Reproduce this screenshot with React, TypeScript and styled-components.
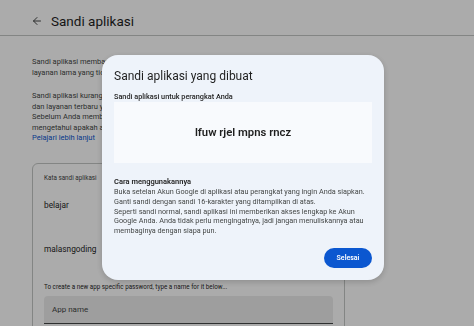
import * as React from "react";
import styled, { createGlobalStyle } from "styled-components";
import { ArrowLeft } from "lucide-react";

const GlobalStyle = createGlobalStyle`
  html, body {
    margin: 0;
    padding: 0;
    width: 474px;
    height: 326px;
    overflow: hidden;
    background: #ffffff;
    font-family: Roboto, "Noto Sans", Arial, sans-serif;
  }
`;

const App: React.FC = () => {
  return (
    <>
      <GlobalStyle />
      <Page>
        <Header>
          <ArrowLeft size={12} strokeWidth={2} color="#444746" />
          <Title>Sandi aplikasi</Title>
        </Header>
        <Content>
          <Para>
            Sandi aplikasi membantu Anda login ke Akun Google di aplikasi dan
            <br />
            layanan lama yang tidak mendukung standar keamanan modern.
          </Para>
          <Para>
            Sandi aplikasi kurang aman dibandingkan menggunakan aplikasi
            <br />
            dan layanan terbaru yang menggunakan standar keamanan modern.
            <br />
            Sebelum Anda membuat sandi aplikasi, sebaiknya Anda
            <br />
            mengetahui apakah aplikasi Anda memerlukan sandi ini untuk login.
            <br />
            <Link>Pelajari lebih lanjut</Link>
          </Para>
          <Card>
            <SmallLabel>Kata sandi aplikasi</SmallLabel>
            <AppRow>belajar</AppRow>
            <AppRow>malasngoding</AppRow>
            <Hint>To create a new app specific password, type a name for it below...</Hint>
            <Input>App name</Input>
          </Card>
        </Content>
      </Page>
      <Scrim />
      <Dialog>
        <DialogTitle>Sandi aplikasi yang dibuat</DialogTitle>
        <FieldLabel>Sandi aplikasi untuk perangkat Anda</FieldLabel>
        <PasswordBox>lfuw rjel mpns rncz</PasswordBox>
        <HowTitle>Cara menggunakannya</HowTitle>
        <HowText>
          Buka setelan Akun Google di aplikasi atau perangkat yang ingin Anda siapkan.
          <br />
          Ganti sandi dengan sandi 16-karakter yang ditampilkan di atas.
          <br />
          Seperti sandi normal, sandi aplikasi ini memberikan akses lengkap ke Akun
          <br />
          Google Anda. Anda tidak perlu mengingatnya, jadi jangan menuliskannya atau
          <br />
          membaginya dengan siapa pun.
        </HowText>
        <Actions>
          <DoneButton>Selesai</DoneButton>
        </Actions>
      </Dialog>
    </>
  );
};

export default App;

const Page = styled.div`
  width: 474px;
  height: 326px;
  overflow: hidden;
  background: #ffffff;
`;

const Header = styled.div`
  height: 36px;
  border-bottom: 1px solid #c4c7c5;
  display: flex;
  align-items: center;
  gap: 8px;
  padding-left: 31px;
  box-sizing: border-box;
  padding-top: 6px;
`;

const Title = styled.div`
  font-size: 13.5px;
  color: #1f1f1f;
  line-height: 20px;
`;

const Content = styled.div`
  width: 313px;
  margin-left: 32px;
  padding-top: 21px;
`;

const Para = styled.p`
  margin: 0 0 13px;
  font-size: 7.5px;
  line-height: 10.5px;
  color: #444746;
  white-space: nowrap;
`;

const Link = styled.span`
  color: #0b57d0;
`;

const Card = styled.div`
  margin-top: 19px;
  border: 1px solid #c4c7c5;
  border-radius: 6px;
  padding: 10px 11px 0;
  height: 200px;
`;

const SmallLabel = styled.div`
  font-size: 6.3px;
  line-height: 8px;
  color: #444746;
  height: 9px;
`;

const AppRow = styled.div`
  height: 44px;
  display: flex;
  align-items: center;
  font-size: 8.3px;
  color: #1f1f1f;
`;

const Hint = styled.div`
  margin-top: 12px;
  font-size: 6.3px;
  line-height: 8px;
  color: #1f1f1f;
  white-space: nowrap;
`;

const Input = styled.div`
  margin-top: 5px;
  height: 28px;
  width: 289px;
  background: #ececec;
  border-bottom: 1px solid #444746;
  border-radius: 4px 4px 0 0;
  display: flex;
  align-items: center;
  padding-left: 8px;
  box-sizing: border-box;
  font-size: 8px;
  color: #444746;
`;

const Scrim = styled.div`
  position: fixed;
  inset: 0;
  background: rgba(0, 0, 0, 0.33);
`;

const Dialog = styled.div`
  position: fixed;
  left: 102px;
  top: 55px;
  width: 282px;
  height: 225px;
  box-sizing: border-box;
  padding: 11px 12px 12px;
  border-radius: 16px;
  background: #eef3fa;
  box-shadow: 0 2px 6px rgba(0, 0, 0, 0.18);
  display: flex;
  flex-direction: column;
`;

const DialogTitle = styled.div`
  font-size: 12px;
  line-height: 20px;
  color: #1f1f1f;
`;

const FieldLabel = styled.div`
  margin-top: 6px;
  font-size: 7.3px;
  line-height: 10px;
  font-weight: 500;
  color: #1f1f1f;
`;

const PasswordBox = styled.div`
  height: 61px;
  background: #f8fafd;
  display: flex;
  align-items: center;
  justify-content: center;
  font-size: 11.3px;
  font-weight: 600;
  color: #1f1f1f;
`;

const HowTitle = styled.div`
  margin-top: 14px;
  font-size: 7.5px;
  line-height: 10px;
  font-weight: 600;
  color: #1f1f1f;
`;

const HowText = styled.div`
  font-size: 7.25px;
  line-height: 9.8px;
  color: #444746;
  white-space: nowrap;
`;

const Actions = styled.div`
  margin-top: auto;
  display: flex;
  justify-content: flex-end;
`;

const DoneButton = styled.button`
  width: 48px;
  height: 20px;
  border: none;
  border-radius: 10px;
  background: #0b57d0;
  color: #ffffff;
  font-family: Roboto, "Noto Sans", Arial, sans-serif;
  font-size: 7px;
  font-weight: 600;
  padding: 0;
`;
